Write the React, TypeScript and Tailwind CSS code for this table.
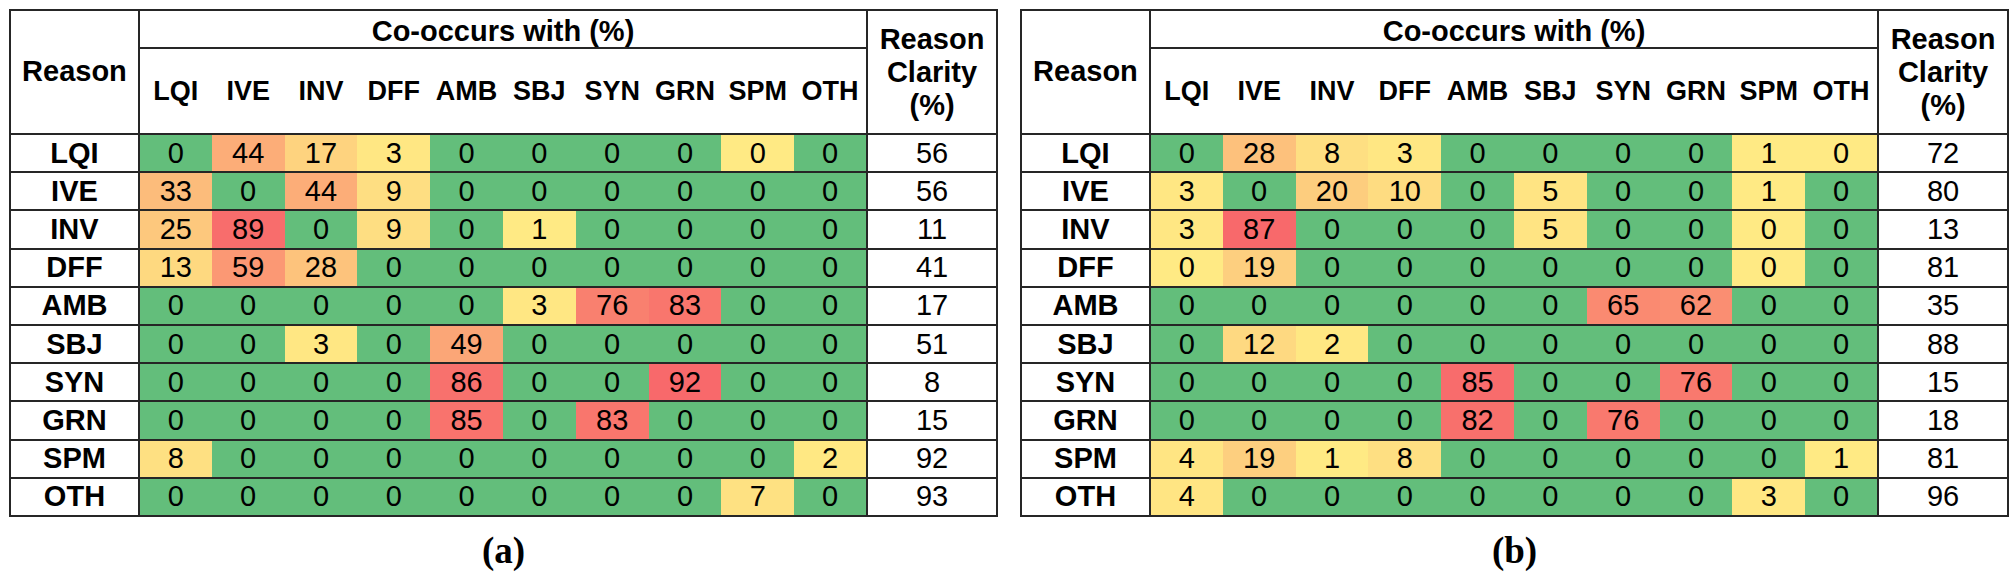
import React from "react";

const COLS = ["LQI", "IVE", "INV", "DFF", "AMB", "SBJ", "SYN", "GRN", "SPM", "OTH"];

type Row = { label: string; values: number[]; clarity: number };

// 0.4 = small value that rounds to 0 but still gets the yellow shade
const tableA: Row[] = [
  { label: "LQI", values: [0, 44, 17, 3, 0, 0, 0, 0, 0.4, 0], clarity: 56 },
  { label: "IVE", values: [33, 0, 44, 9, 0, 0, 0, 0, 0, 0], clarity: 56 },
  { label: "INV", values: [25, 89, 0, 9, 0, 1, 0, 0, 0, 0], clarity: 11 },
  { label: "DFF", values: [13, 59, 28, 0, 0, 0, 0, 0, 0, 0], clarity: 41 },
  { label: "AMB", values: [0, 0, 0, 0, 0, 3, 76, 83, 0, 0], clarity: 17 },
  { label: "SBJ", values: [0, 0, 3, 0, 49, 0, 0, 0, 0, 0], clarity: 51 },
  { label: "SYN", values: [0, 0, 0, 0, 86, 0, 0, 92, 0, 0], clarity: 8 },
  { label: "GRN", values: [0, 0, 0, 0, 85, 0, 83, 0, 0, 0], clarity: 15 },
  { label: "SPM", values: [8, 0, 0, 0, 0, 0, 0, 0, 0, 2], clarity: 92 },
  { label: "OTH", values: [0, 0, 0, 0, 0, 0, 0, 0, 7, 0], clarity: 93 },
];

const tableB: Row[] = [
  { label: "LQI", values: [0, 28, 8, 3, 0, 0, 0, 0, 1, 0.4], clarity: 72 },
  { label: "IVE", values: [3, 0, 20, 10, 0, 5, 0, 0, 1, 0], clarity: 80 },
  { label: "INV", values: [3, 87, 0, 0, 0, 5, 0, 0, 0.4, 0], clarity: 13 },
  { label: "DFF", values: [0.4, 19, 0, 0, 0, 0, 0, 0, 0.4, 0], clarity: 81 },
  { label: "AMB", values: [0, 0, 0, 0, 0, 0, 65, 62, 0, 0], clarity: 35 },
  { label: "SBJ", values: [0, 12, 2, 0, 0, 0, 0, 0, 0, 0], clarity: 88 },
  { label: "SYN", values: [0, 0, 0, 0, 85, 0, 0, 76, 0, 0], clarity: 15 },
  { label: "GRN", values: [0, 0, 0, 0, 82, 0, 76, 0, 0, 0], clarity: 18 },
  { label: "SPM", values: [4, 19, 1, 8, 0, 0, 0, 0, 0, 1], clarity: 81 },
  { label: "OTH", values: [4, 0, 0, 0, 0, 0, 0, 0, 3, 0], clarity: 96 },
];

const GREEN = [99, 190, 123];
const YELLOW = [255, 235, 132];
const RED = [248, 105, 107];

function cellColor(v: number, max: number) {
  if (v === 0) return `rgb(${GREEN.join(",")})`;
  const t = Math.min(1, v / max);
  const c = YELLOW.map((y, i) => Math.round(y + (RED[i] - y) * t));
  return `rgb(${c.join(",")})`;
}

const line = "border-[#262626]";

const HeatTable = ({ rows, caption }: { rows: Row[]; caption: string }) => {
  const max = Math.max(...rows.flatMap((r) => r.values));
  return (
    <div className="flex flex-col items-center w-[987px]">
      <table className="table-fixed border-collapse w-[987px] text-black font-['Liberation_Sans',Arial,sans-serif]">
        <colgroup>
          <col className="w-[129px]" />
          {COLS.map((c) => (
            <col key={c} className="w-[72.8px]" />
          ))}
          <col className="w-[130px]" />
        </colgroup>
        <thead>
          <tr className="h-[38px]">
            <th rowSpan={2} className={`border-2 ${line} text-[29px] font-bold align-middle`}>
              Reason
            </th>
            <th colSpan={10} className={`border-t-2 border-b-2 ${line} text-[29px] font-bold align-bottom leading-[32px]`}>
              Co-occurs with (%)
            </th>
            <th rowSpan={2} className={`border-2 ${line} text-[29px] font-bold leading-[33px] align-middle`}>
              Reason
              <br />
              Clarity
              <br />
              (%)
            </th>
          </tr>
          <tr className="h-[86px]">
            {COLS.map((c) => (
              <th key={c} className={`border-b-2 ${line} text-[27px] font-bold align-middle`}>
                {c}
              </th>
            ))}
          </tr>
        </thead>
        <tbody>
          {rows.map((r) => (
            <tr key={r.label} className="h-[38.2px]">
              <td className={`border-2 ${line} text-[29px] font-bold text-center leading-none`}>{r.label}</td>
              {r.values.map((v, i) => (
                <td
                  key={i}
                  className={`border-y-2 ${line} text-[29px] text-center leading-none`}
                  style={{ backgroundColor: cellColor(v, max) }}
                >
                  {Math.round(v)}
                </td>
              ))}
              <td className={`border-2 ${line} text-[29px] text-center leading-none`}>{r.clarity}</td>
            </tr>
          ))}
        </tbody>
      </table>
      <div className="mt-[15px] text-[37px] leading-none font-bold font-['Liberation_Serif','Times_New_Roman',serif]">
        {caption}
      </div>
    </div>
  );
}

export default function App() {
  return (
    <div className="w-[2016px] h-[582px] bg-white flex gap-[24px] pl-[10px] pt-[9px]">
      <HeatTable rows={tableA} caption="(a)" />
      <HeatTable rows={tableB} caption="(b)" />
    </div>
  );
}
